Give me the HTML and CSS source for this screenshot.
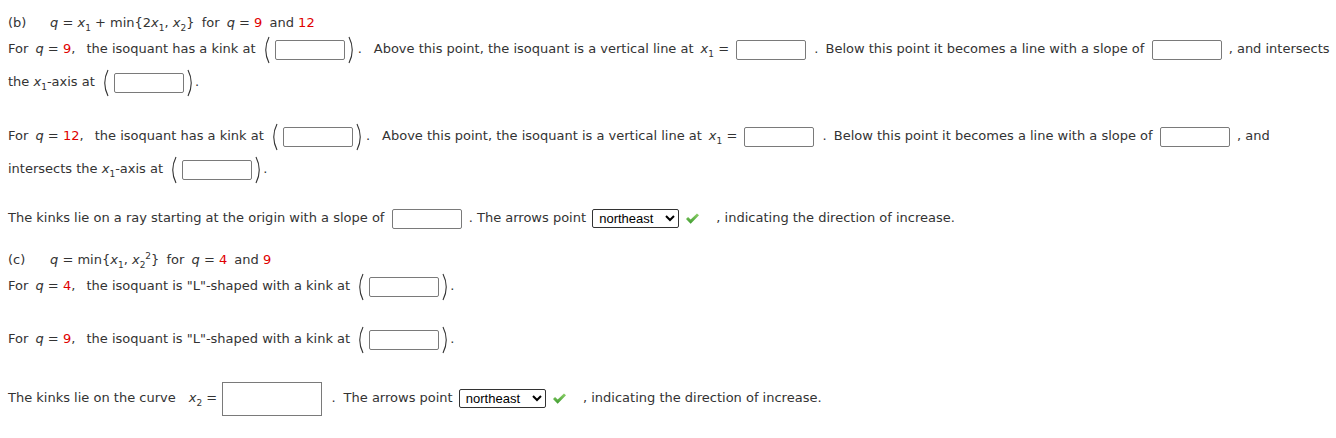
FILE: index.html
```html
<!DOCTYPE html>
<html>
<head>
<meta charset="utf-8">
<link rel="stylesheet" href="styles.css">
</head>
<body>
<div class="page">
  <div class="head"><span class="label">(b)</span><span class="m"><i>q</i> = <i>x</i><sub>1</sub> + min{2<i>x</i><sub>1</sub>, <i>x</i><sub>2</sub>}</span> for <span class="m"><i>q</i> = <span class="red">9</span></span> and <span class="red">12</span></div>
  <p class="para">For <span class="m mc"><i>q</i> = <span class="red">9</span>,</span> the isoquant has a kink at <span class="pg"><svg class="paren" viewBox="0 0 9 28"><path d="M7 1 Q0.5 14 7 27"/></svg><input class="box" type="text"><svg class="paren" viewBox="0 0 9 28"><path d="M2 1 Q8.5 14 2 27"/></svg></span><span class="dot">.</span>Above this point, the isoquant is a vertical line at<span class="mx mx1"><i>x</i><sub>1</sub> =</span> <input class="box" type="text"> <span class="dotb">.</span>Below this point it becomes a line with a slope of <input class="box" type="text"> , and intersects<br>the <span class="m2"><i>x</i><sub>1</sub></span>-axis at <span class="pg"><svg class="paren" viewBox="0 0 9 28"><path d="M7 1 Q0.5 14 7 27"/></svg><input class="box" type="text"><svg class="paren" viewBox="0 0 9 28"><path d="M2 1 Q8.5 14 2 27"/></svg></span>.</p>
  <p class="para p2">For <span class="m mc"><i>q</i> = <span class="red">12</span>,</span> the isoquant has a kink at <span class="pg"><svg class="paren" viewBox="0 0 9 28"><path d="M7 1 Q0.5 14 7 27"/></svg><input class="box" type="text"><svg class="paren" viewBox="0 0 9 28"><path d="M2 1 Q8.5 14 2 27"/></svg></span><span class="dot">.</span>Above this point, the isoquant is a vertical line at<span class="mx mx1"><i>x</i><sub>1</sub> =</span> <input class="box" type="text"> <span class="dotb">.</span>Below this point it becomes a line with a slope of <input class="box" type="text"> , and<br>intersects the <span class="m2"><i>x</i><sub>1</sub></span>-axis at <span class="pg"><svg class="paren" viewBox="0 0 9 28"><path d="M7 1 Q0.5 14 7 27"/></svg><input class="box" type="text"><svg class="paren" viewBox="0 0 9 28"><path d="M2 1 Q8.5 14 2 27"/></svg></span>.</p>
  <p class="para p3">The kinks lie on a ray starting at the origin with a slope of <input class="box" type="text"> . The arrows point <select class="sel"><option>northeast</option></select><svg class="check" viewBox="0 0 16 14"><defs><linearGradient id="g1" x1="0" y1="0" x2="0" y2="1"><stop offset="0" stop-color="#8fd16a"/><stop offset="1" stop-color="#3c9a2e"/></linearGradient></defs><path d="M1 7.5 L3.2 5.4 L6 8.2 L12.8 1.5 L15 3.6 L6 12.6 Z" fill="url(#g1)"/></svg> , indicating the direction of increase.</p>
  <div class="head h2"><span class="label">(c)</span><span class="m"><i>q</i> = min{<i>x</i><sub>1</sub>, <i>x</i><sub>2</sub><sup>2</sup>}</span> for <span class="m"><i>q</i> = <span class="red">4</span></span> and <span class="red">9</span></div>
  <p class="para">For <span class="m mc"><i>q</i> = <span class="red">4</span>,</span> the isoquant is "L"-shaped with a kink at <span class="pg"><svg class="paren" viewBox="0 0 9 28"><path d="M7 1 Q0.5 14 7 27"/></svg><input class="box" type="text"><svg class="paren" viewBox="0 0 9 28"><path d="M2 1 Q8.5 14 2 27"/></svg></span>.</p>
  <p class="para p4">For <span class="m mc"><i>q</i> = <span class="red">9</span>,</span> the isoquant is "L"-shaped with a kink at <span class="pg"><svg class="paren" viewBox="0 0 9 28"><path d="M7 1 Q0.5 14 7 27"/></svg><input class="box" type="text"><svg class="paren" viewBox="0 0 9 28"><path d="M2 1 Q8.5 14 2 27"/></svg></span>.</p>
  <p class="para p5">The kinks lie on the curve<span class="mx mx2"><i>x</i><sub>2</sub> =</span> <input class="box big" type="text"> <span class="dotb dot2">.</span>The arrows point <select class="sel"><option>northeast</option></select><svg class="check" viewBox="0 0 16 14"><defs><linearGradient id="g2" x1="0" y1="0" x2="0" y2="1"><stop offset="0" stop-color="#8fd16a"/><stop offset="1" stop-color="#3c9a2e"/></linearGradient></defs><path d="M1 7.5 L3.2 5.4 L6 8.2 L12.8 1.5 L15 3.6 L6 12.6 Z" fill="url(#g2)"/></svg> , indicating the direction of increase.</p>
</div>
</body>
</html>
```

FILE: styles.css
```css
html, body {
  margin: 0;
  padding: 0;
  background: #ffffff;
}
.page {
  padding: 13px 8px 0 8px;
  font-family: "DejaVu Sans", Verdana, sans-serif;
  font-size: 13px;
  color: #333333;
  white-space: nowrap;
}
.head {
  line-height: 19px;
  height: 19px;
}
.label {
  display: inline-block;
  width: 39px;
}
.m {
  margin: 0 3px;
}
.mc {
  margin-right: 7px;
}
.mx1 {
  margin-left: 7px;
}
.mx2 {
  margin-left: 13px;
  margin-right: -2px;
}
.m2 {
  margin: 0;
}
i {
  font-style: italic;
}
sub, sup {
  font-size: 9px;
  line-height: 0;
}
.red {
  color: #e00000;
}
.para {
  margin: 0;
  line-height: 33px;
}
.p2 { margin-top: 21px; }
.p3 { margin-top: 16px; }
.h2 { margin-top: 16px; }
.p4 { margin-top: 20px; }
.p5 { margin-top: 23px; line-height: 40px; }
.pg {
  display: inline-flex;
  align-items: center;
  vertical-align: middle;
  margin-left: 2px;
}
.paren {
  width: 9px;
  height: 28px;
}
.paren path {
  fill: none;
  stroke: #333;
  stroke-width: 1.1;
}
.pg .box {
  margin: 0 2px 0 4px;
}
.dot {
  margin: 0 12px 0 2px;
}
.dotb {
  margin: 0 7px 0 1px;
}
.dot2 {
  margin-left: 2px;
  margin-right: 8px;
}
.box {
  box-sizing: border-box;
  width: 70px;
  height: 20px;
  border: 1px solid #7a7a7a;
  border-radius: 2px;
  margin: 0 3px;
  padding: 0;
  vertical-align: middle;
  background: #fff;
}
.box.big {
  width: 100px;
  height: 34px;
  border-radius: 0;
}
.sel {
  font-family: "Liberation Sans", Arial, sans-serif;
  font-size: 13px;
  color: #000;
  width: 87px;
  height: 19px;
  padding: 0 0 0 2px;
  border: 1px solid #333;
  border-radius: 2px;
  background: #fff;
  vertical-align: middle;
  margin: 0 2px 0 2px;
}
.check {
  width: 15px;
  height: 13px;
  vertical-align: middle;
  margin: 0 12px 0 4px;
}
```
